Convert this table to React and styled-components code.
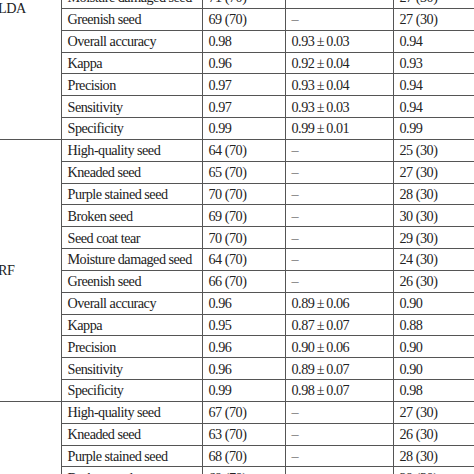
import React from 'react';
import styled, { createGlobalStyle } from 'styled-components';

const GlobalStyle = createGlobalStyle`
  html, body {
    margin: 0;
    padding: 0;
    background: #fff;
    overflow: hidden;
    height: 474px;
  }
`;

const Page = styled.div`
  width: 474px;
  height: 474px;
  overflow: hidden;
  background: #fff;
`;

const Table = styled.table`
  border-collapse: collapse;
  table-layout: fixed;
  width: 511px;
  margin-top: -123px;
  margin-left: -8px;
  font-family: "Liberation Serif", "Times New Roman", serif;
  font-size: 14.2px;
  letter-spacing: -0.5px;
  color: #222;
`;

const Col = styled.col`
  width: ${p => p.$w}px;
`;

const Row = styled.tr`
  height: 21.83px;
`;

const Method = styled.td`
  padding: 0 0 0 6px;
  vertical-align: middle;
  border-top: 1px solid #555;
  border-bottom: 1px solid #555;
`;

const Cell = styled.td`
  padding: 0 5px 0 6px;
  border: 1px solid #555;
  white-space: nowrap;
  overflow: hidden;
  line-height: 1;
  color: ${p => (p.$dash ? '#777' : '#222')};
`;

const widths = [69, 141, 83, 108, 110];

const metric = (name, a, b, c) => [name, a, '0.' + b[0] + '\u2009±\u2009' + b[1], c];

const groups = [
  {
    name: 'LDA',
    rows: [
      ['High-quality seed', '68 (70)', '–', '28 (30)'],
      ['Kneaded seed', '67 (70)', '–', '27 (30)'],
      ['Purple stained seed', '70 (70)', '–', '29 (30)'],
      ['Broken seed', '69 (70)', '–', '30 (30)'],
      ['Seed coat tear', '70 (70)', '–', '28 (30)'],
      ['Moisture damaged seed', '71 (70)', '–', '27 (30)'],
      ['Greenish seed', '69 (70)', '–', '27 (30)'],
      metric('Overall accuracy', '0.98', ['93', '0.03'], '0.94'),
      metric('Kappa', '0.96', ['92', '0.04'], '0.93'),
      metric('Precision', '0.97', ['93', '0.04'], '0.94'),
      metric('Sensitivity', '0.97', ['93', '0.03'], '0.94'),
      metric('Specificity', '0.99', ['99', '0.01'], '0.99'),
    ],
  },
  {
    name: 'RF',
    rows: [
      ['High-quality seed', '64 (70)', '–', '25 (30)'],
      ['Kneaded seed', '65 (70)', '–', '27 (30)'],
      ['Purple stained seed', '70 (70)', '–', '28 (30)'],
      ['Broken seed', '69 (70)', '–', '30 (30)'],
      ['Seed coat tear', '70 (70)', '–', '29 (30)'],
      ['Moisture damaged seed', '64 (70)', '–', '24 (30)'],
      ['Greenish seed', '66 (70)', '–', '26 (30)'],
      metric('Overall accuracy', '0.96', ['89', '0.06'], '0.90'),
      metric('Kappa', '0.95', ['87', '0.07'], '0.88'),
      metric('Precision', '0.96', ['90', '0.06'], '0.90'),
      metric('Sensitivity', '0.96', ['89', '0.07'], '0.90'),
      metric('Specificity', '0.99', ['98', '0.07'], '0.98'),
    ],
  },
  {
    name: 'SVM',
    rows: [
      ['High-quality seed', '67 (70)', '–', '27 (30)'],
      ['Kneaded seed', '63 (70)', '–', '26 (30)'],
      ['Purple stained seed', '68 (70)', '–', '28 (30)'],
      ['Broken seed', '69 (70)', '–', '29 (30)'],
      ['Seed coat tear', '68 (70)', '–', '28 (30)'],
      ['Moisture damaged seed', '66 (70)', '–', '27 (30)'],
      ['Greenish seed', '67 (70)', '–', '28 (30)'],
      metric('Overall accuracy', '0.97', ['91', '0.04'], '0.92'),
      metric('Kappa', '0.96', ['90', '0.05'], '0.91'),
      metric('Precision', '0.97', ['91', '0.05'], '0.92'),
      metric('Sensitivity', '0.97', ['91', '0.04'], '0.92'),
      metric('Specificity', '0.99', ['98', '0.01'], '0.99'),
    ],
  },
];

export default function App() {
  return (
    <Page>
      <GlobalStyle />
      <Table>
        <colgroup>
          {widths.map((w, i) => (
            <Col key={i} $w={w} />
          ))}
        </colgroup>
        <tbody>
          {groups.map(g =>
            g.rows.map((r, i) => (
              <Row key={g.name + i}>
                {i === 0 && <Method rowSpan={g.rows.length}>{g.name}</Method>}
                {r.map((v, j) => (
                  <Cell key={j} $dash={v === '–'}>
                    {v}
                  </Cell>
                ))}
              </Row>
            ))
          )}
        </tbody>
      </Table>
    </Page>
  );
}
